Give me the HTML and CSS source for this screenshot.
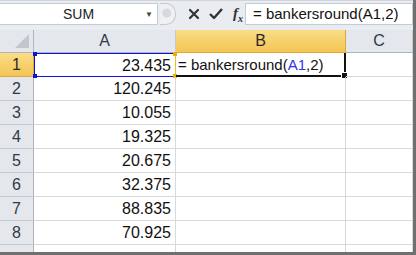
FILE: index.html
```html
<!DOCTYPE html>
<html lang="en">
<head>
  <meta charset="UTF-8">
  <title>bankersround</title>
  <link rel="stylesheet" href="styles.css">
</head>
<body>
  <div class="window">
    <div class="formula-bar">
      <div class="name-box">
        <span class="name">SUM</span>
        <span class="drop">&#9660;</span>
      </div>
      <div class="buttons">
        <span class="knob"></span>
        <svg class="btn" width="14" height="14" viewBox="0 0 14 14">
          <path d="M3 3 L11 11 M11 3 L3 11" stroke="#333" stroke-width="2.2" stroke-linecap="round"/>
        </svg>
        <svg class="btn" width="16" height="14" viewBox="0 0 16 14">
          <path d="M2 7 L6 11 L14 2" fill="none" stroke="#333" stroke-width="2.4" stroke-linejoin="round"/>
        </svg>
        <span class="fx">f<sub>x</sub></span>
      </div>
      <div class="formula-input">= bankersround(A1,2)</div>
    </div>

    <div class="sheet">
      <div class="corner"><span class="tri"></span></div>
      <div class="col-head">A</div>
      <div class="col-head active">B</div>
      <div class="col-head">C</div>

      <div class="row-head active">1</div>
      <div class="cell num ref">23.435<i class="dot tl"></i><i class="dot tr"></i><i class="dot bl"></i><i class="dot br"></i></div>
      <div class="cell edit">= bankersround(<span class="blue">A1</span>,2)<i class="handle"></i></div>
      <div class="cell"></div>

      <div class="row-head">2</div>
      <div class="cell num">120.245</div>
      <div class="cell"></div>
      <div class="cell"></div>

      <div class="row-head">3</div>
      <div class="cell num">10.055</div>
      <div class="cell"></div>
      <div class="cell"></div>

      <div class="row-head">4</div>
      <div class="cell num">19.325</div>
      <div class="cell"></div>
      <div class="cell"></div>

      <div class="row-head">5</div>
      <div class="cell num">20.675</div>
      <div class="cell"></div>
      <div class="cell"></div>

      <div class="row-head">6</div>
      <div class="cell num">32.375</div>
      <div class="cell"></div>
      <div class="cell"></div>

      <div class="row-head">7</div>
      <div class="cell num">88.835</div>
      <div class="cell"></div>
      <div class="cell"></div>

      <div class="row-head">8</div>
      <div class="cell num">70.925</div>
      <div class="cell"></div>
      <div class="cell"></div>

      <div class="row-head short"></div>
      <div class="cell short"></div>
      <div class="cell short"></div>
      <div class="cell short"></div>
    </div>
  </div>
</body>
</html>
```

FILE: styles.css
```css
body {
  margin: 0;
  width: 416px;
  height: 255px;
  overflow: hidden;
  background: #fff;
  font-family: "Liberation Sans", Arial, sans-serif;
}

.window {
  width: 413px;
  height: 252px;
  overflow: hidden;
  background: #e9ecf0;
  border-right: 3px solid #707070;
  border-bottom: 3px solid #707070;
}

/* formula bar */
.formula-bar {
  display: flex;
  align-items: stretch;
  height: 22px;
  padding-top: 2px;
  border-top: 1px solid #d2d6dc;
  margin-bottom: 5px;
}

.name-box {
  width: 158px;
  display: flex;
  align-items: center;
  background: #fff;
  border: 1px solid #c6ccd4;
  border-left: none;
  box-sizing: border-box;
}

.name {
  flex: 1;
  text-align: center;
  font-size: 14px;
  color: #222;
  padding-left: 12px;
}

.drop {
  font-size: 8px;
  color: #444;
  margin-right: 4px;
}

.buttons {
  width: 87px;
  display: flex;
  align-items: center;
  gap: 7px;
  padding-left: 2px;
  box-sizing: border-box;
}

.knob {
  width: 15px;
  height: 20px;
  border-radius: 0 10px 10px 0;
  border: 1px solid #c4c9d0;
  border-left: none;
  background: radial-gradient(circle at 45% 45%, #d6d9de 0, #d6d9de 4px, #eef0f2 5px);
  margin-right: 4px;
}

.fx {
  font-family: "Liberation Serif", serif;
  font-style: italic;
  font-weight: bold;
  font-size: 15px;
  color: #333;
  margin-left: 2px;
}

.fx sub {
  font-size: 10px;
}

.formula-input {
  flex: 1;
  background: #fff;
  border: 1px solid #c6ccd4;
  box-sizing: border-box;
  font-size: 15px;
  line-height: 20px;
  padding-left: 7px;
  color: #111;
}

/* sheet grid */
.sheet {
  display: grid;
  grid-template-columns: 34px 142px 170px 67px;
  grid-template-rows: 23px repeat(8, 24px) 7px;
  background: #fff;
}

.corner, .col-head, .row-head {
  background: #e4e7ec;
  color: #2f3a48;
  box-sizing: border-box;
}

.corner {
  position: relative;
  border-right: 1px solid #aeb4bd;
  border-bottom: 1px solid #aeb4bd;
}

.tri {
  position: absolute;
  right: 4px;
  bottom: 4px;
  width: 0;
  height: 0;
  border-left: 14px solid transparent;
  border-bottom: 14px solid #c3c7cd;
}

.col-head {
  text-align: center;
  font-size: 16px;
  line-height: 22px;
  border-right: 1px solid #c5cad1;
  border-bottom: 1px solid #aeb4bd;
}

.row-head {
  text-align: center;
  font-size: 16px;
  line-height: 23px;
  border-right: 1px solid #aeb4bd;
  border-bottom: 1px solid #c5cad1;
}

.col-head.active, .row-head.active {
  background: linear-gradient(#f9dd86, #f4c554);
  color: #2a2a2a;
  border-color: #e2a73a;
}

.cell {
  box-sizing: border-box;
  border-right: 1px solid #d8d8d8;
  border-bottom: 1px solid #d8d8d8;
  font-size: 15px;
  line-height: 23px;
  color: #111;
  position: relative;
}

.num {
  text-align: right;
  padding-right: 4px;
  font-size: 16px;
}

.short {
  border-bottom: none;
}

/* reference highlight on A1 */
.ref {
  border: 1px solid #1010e0;
  border-right-color: #f0c020;
}

.dot {
  position: absolute;
  width: 4px;
  height: 4px;
  background: #1010e0;
}

.dot.tl { left: -2px; top: -2px; }
.dot.tr { right: -2px; top: -2px; background: #e8b000; }
.dot.bl { left: -2px; bottom: -2px; }
.dot.br { right: -2px; bottom: -2px; background: #e8b000; }

/* cell being edited */
.edit {
  padding-left: 2px;
  border-right: 2px solid #111;
  border-bottom: 2px solid #111;
  white-space: nowrap;
}

.blue {
  color: #3333ee;
}

.handle {
  position: absolute;
  right: -4px;
  bottom: -4px;
  width: 5px;
  height: 5px;
  background: #111;
  border: 1px solid #fff;
}
```
